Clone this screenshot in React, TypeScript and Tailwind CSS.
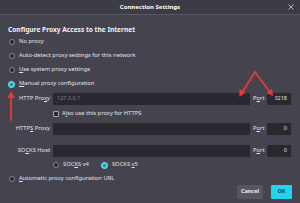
import React from "react";

const Radio = ({ checked }: { checked?: boolean }) =>
  checked ? (
    <span className="w-[7px] h-[7px] rounded-full bg-[#22d3ee] border border-[#7fe9f7] flex items-center justify-center shrink-0">
      <span className="w-[3px] h-[3px] rounded-full bg-[#1b8fa3]" />
    </span>
  ) : (
    <span className="w-[6px] h-[6px] rounded-full bg-[#25242a] border border-[#8b8993] shrink-0" />
  );

const RadioRow = ({ checked, children }: { checked?: boolean; children: React.ReactNode }) => (
  <div className="h-[14px] flex items-center gap-[3px] pl-[1px]">
    <span className="w-[7px] flex items-center justify-center">
      <Radio checked={checked} />
    </span>
    <span className="pl-[1px]">{children}</span>
  </div>
);

const ProxyRow = ({ label, value, port, cls }: { label: React.ReactNode; value?: string; port: string; cls?: string }) => (
  <div className={"h-[14px] flex items-center " + (cls || "")}>
    <span className="w-[44px] text-right pr-[1px]">{label}</span>
    <div className="ml-[2px] w-[197px] h-[12px] bg-[#29282e] rounded-[1px] flex items-center pl-[4px] text-[#85838c] text-[5.5px]">
      {value}
    </div>
    <span className="ml-[3px] w-[14px]">
      P<span className="underline">o</span>rt
    </span>
    <div className="w-[24px] h-[12px] bg-[#29282e] rounded-[1px] flex items-center justify-end pr-[4px] text-[5.5px]">
      {port}
    </div>
  </div>
);

export default function App() {
  return (
    <div
      className="relative w-[300px] h-[203px] bg-[#45434e] text-[#e4e3e7] text-[5.8px] leading-none flex flex-col overflow-hidden"
      style={{ fontFamily: '"Noto Sans", "DejaVu Sans", sans-serif' }}
    >
      <div className="h-[15px] shrink-0 bg-[#3d3b45] border-b border-[#5a5865] grid grid-cols-[1fr_auto_1fr] items-center">
        <span />
        <span className="font-bold text-[6px] text-white">Connection Settings</span>
        <span className="flex justify-end pr-[6px] text-[#d8d7dc]">
          <svg width="6" height="6" viewBox="0 0 6 6">
            <path d="M0.5 0.5L5.5 5.5M5.5 0.5L0.5 5.5" stroke="#d8d7dc" strokeWidth="0.8" />
          </svg>
        </span>
      </div>
      <div className="flex flex-col px-[7px] pt-[10px]">
        <div className="h-[10px] flex items-center font-bold text-[6.6px] text-[#f2f1f4] pl-[1px]">
          Configure Proxy Access to the Internet
        </div>
        <RadioRow>No proxy</RadioRow>
        <RadioRow>Auto-detect proxy settings for this network</RadioRow>
        <RadioRow>
          <span className="underline">U</span>se system proxy settings
        </RadioRow>
        <RadioRow checked>
          <span className="underline">M</span>anual proxy configuration
        </RadioRow>
        <ProxyRow
          cls="mt-[1px]"
          label={
            <>
              HTTP Pro<span className="underline">x</span>y
            </>
          }
          value="127.0.0.1"
          port="3218"
        />
        <div className="h-[15px] flex items-center pl-[46px] gap-[3px]">
          <span className="w-[6px] h-[6px] border border-[#a9a7b0] bg-[#2b2a30] rounded-[1px]" />
          <span>
            A<span className="underline">l</span>so use this proxy for HTTPS
          </span>
        </div>
        <ProxyRow
          cls="mt-[1px]"
          label={
            <>
              HTTP<span className="underline">S</span> Proxy
            </>
          }
          port="0"
        />
        <ProxyRow
          cls="mt-[8px]"
          label={
            <>
              SO<span className="underline">C</span>KS Host
            </>
          }
          port="0"
        />
        <div className="h-[14px] flex items-center pl-[46px]">
          <Radio />
          <span className="ml-[4px]">
            SOC<span className="underline">K</span>S v4
          </span>
          <span className="ml-[12px]">
            <Radio checked />
          </span>
          <span className="ml-[4px]">
            SOCKS <span className="underline">v</span>5
          </span>
        </div>
        <div className="h-[10px] mt-[2px] flex items-center gap-[3px] pl-[1px]">
          <span className="w-[7px] flex items-center justify-center">
            <Radio />
          </span>
          <span className="pl-[1px]">
            <span className="underline">A</span>utomatic proxy configuration URL
          </span>
        </div>
        <div className="h-[14px] mt-[1px] flex justify-end gap-[8px] pr-[1px]">
          <div className="w-[26px] h-[14px] bg-[#57555f] rounded-[1px] flex items-center justify-center font-bold text-[5.5px] text-[#f0eff2]">
            Cancel
          </div>
          <div className="w-[21px] h-[14px] bg-[#1fd5ef] rounded-[1px] flex items-center justify-center font-bold text-[5.5px] text-[#1c3f48]">
            OK
          </div>
        </div>
      </div>
      <svg className="absolute inset-0 pointer-events-none" width="300" height="203" viewBox="0 0 300 203">
        <g stroke="#e8383b" strokeWidth="1.8" fill="none" strokeLinecap="round" strokeLinejoin="round">
          <path d="M11 120L11 96" />
          <path d="M255 72L242.5 92" />
          <path d="M255 72L269.5 91.5" />
        </g>
        <g fill="#e8383b">
          <path d="M11 91.5L15 98L7 98Z" />
          <path d="M239.5 97L239.5 89L245.5 92.5Z" />
          <path d="M273 96L266.5 93L272 88.5Z" />
        </g>
      </svg>
    </div>
  );
}
